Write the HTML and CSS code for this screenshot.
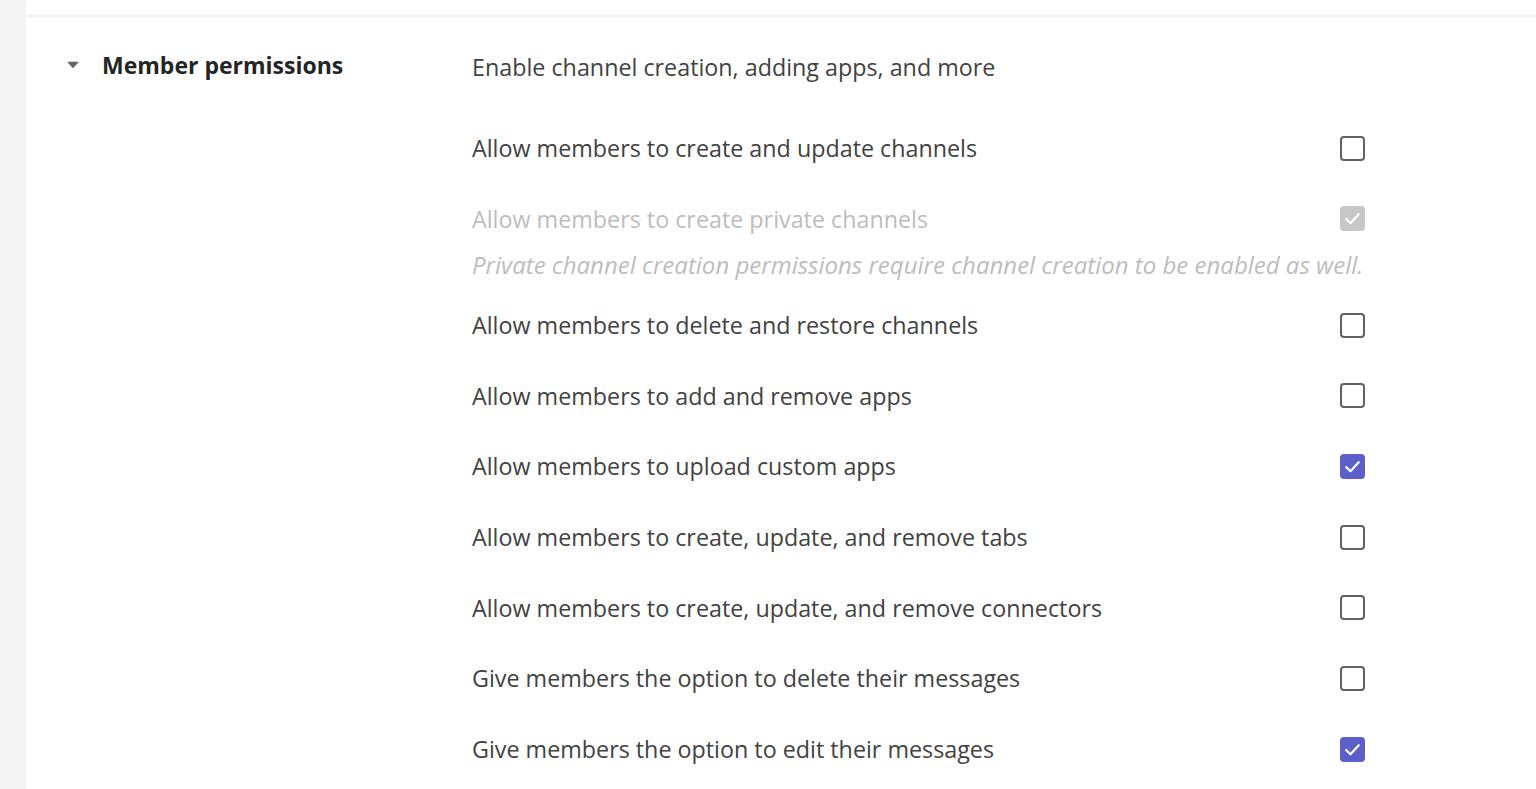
FILE: index.html
```html
<!DOCTYPE html>
<html lang="en">
<head>
    <meta charset="UTF-8">
    <title>Member permissions</title>
    <link rel="stylesheet" href="styles.css">
</head>
<body>
    <div class="sidebar"></div>
    <div class="main">
        <div class="top-strip"></div>
        <div class="section">
            <div class="section-head">
                <svg class="caret" width="12" height="8" viewBox="0 0 12 8"><path d="M1 1.2 H11 L6 6.8 Z" fill="#616161" stroke="#616161" stroke-width="1" stroke-linejoin="round"/></svg>
                <h2>Member permissions</h2>
            </div>
            <div class="section-body">
                <div class="description">Enable channel creation, adding apps, and more</div>

                <div class="row">
                    <span class="label">Allow members to create and update channels</span>
                    <span class="checkbox"></span>
                </div>
                <div class="row with-hint disabled">
                    <div class="row-line">
                        <span class="label">Allow members to create private channels</span>
                        <span class="checkbox checked"><svg viewBox="0 0 16 16"><path d="M4 8.4 L6.7 11 L12 5.3" /></svg></span>
                    </div>
                    <div class="hint">Private channel creation permissions require channel creation to be enabled as well.</div>
                </div>
                <div class="row">
                    <span class="label">Allow members to delete and restore channels</span>
                    <span class="checkbox"></span>
                </div>
                <div class="row">
                    <span class="label">Allow members to add and remove apps</span>
                    <span class="checkbox"></span>
                </div>
                <div class="row">
                    <span class="label">Allow members to upload custom apps</span>
                    <span class="checkbox checked"><svg viewBox="0 0 16 16"><path d="M4 8.4 L6.7 11 L12 5.3" /></svg></span>
                </div>
                <div class="row">
                    <span class="label">Allow members to create, update, and remove tabs</span>
                    <span class="checkbox"></span>
                </div>
                <div class="row">
                    <span class="label">Allow members to create, update, and remove connectors</span>
                    <span class="checkbox"></span>
                </div>
                <div class="row">
                    <span class="label">Give members the option to delete their messages</span>
                    <span class="checkbox"></span>
                </div>
                <div class="row">
                    <span class="label">Give members the option to edit their messages</span>
                    <span class="checkbox checked"><svg viewBox="0 0 16 16"><path d="M4 8.4 L6.7 11 L12 5.3" /></svg></span>
                </div>
            </div>
        </div>
    </div>
</body>
</html>
```

FILE: styles.css
```css
* {
    box-sizing: border-box;
}

html, body {
    margin: 0;
    padding: 0;
    height: 100%;
    overflow: hidden;
}

body {
    display: flex;
    font-family: 'Open Sans', 'Noto Sans', sans-serif;
    color: #242424;
    background: #ffffff;
}

.sidebar {
    width: 26px;
    flex-shrink: 0;
    background: #f3f3f3;
}

.main {
    flex: 1;
    background: #ffffff;
}

.top-strip {
    height: 18px;
    border-bottom: 4px solid #f5f5f5;
}

.section {
    display: flex;
    padding-top: 33px;
}

.section-head {
    width: 446px;
    flex-shrink: 0;
    display: flex;
    align-items: center;
    height: 32px;
    padding-left: 41px;
}

.caret {
    margin-top: -4px;
    margin-right: 23px;
}

.section-head h2 {
    margin: -4px 0 0;
    font-size: 23px;
    font-weight: 700;
    line-height: 32px;
    color: #242424;
}

.section-body {
    width: 893px;
}

.description {
    font-size: 23.3px;
    line-height: 32px;
    color: #424242;
    margin-bottom: 30px;
}

.row {
    height: 70.7px;
    display: flex;
    align-items: center;
    justify-content: space-between;
}

.row.with-hint {
    height: auto;
    display: block;
    padding: 19px 0 9px;
}

.row-line {
    display: flex;
    align-items: center;
    justify-content: space-between;
    height: 32px;
}

.label {
    font-size: 23.3px;
    line-height: 32px;
    color: #424242;
}

.hint {
    margin-top: 14px;
    font-size: 24px;
    line-height: 32px;
    font-style: italic;
    color: #bdbdbd;
    white-space: nowrap;
}

.disabled .label {
    color: #bdbdbd;
}

.checkbox {
    width: 25px;
    height: 25px;
    flex-shrink: 0;
    border: 2px solid #616161;
    border-radius: 4px;
    display: flex;
    align-items: center;
    justify-content: center;
}

.checkbox.checked {
    border: none;
    background: #5b5fc7;
}

.disabled .checkbox.checked {
    background: #c7c7c7;
}

.checkbox svg {
    width: 25px;
    height: 25px;
    fill: none;
    stroke: #ffffff;
    stroke-width: 1.4;
    stroke-linecap: round;
    stroke-linejoin: round;
}
```
